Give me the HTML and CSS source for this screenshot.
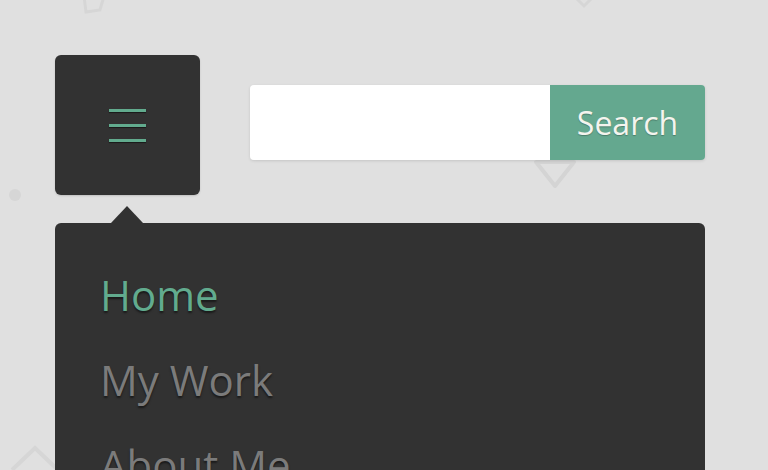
FILE: index.html
```html
<!DOCTYPE html>
<html lang="en">

<head>
  <meta charset="UTF-8">
  <meta name="viewport" content="width=device-width, initial-scale=1.0">
  <title>Menu</title>
  <link rel="stylesheet" href="styles.css">
</head>

<body>
  <svg class="bg-shapes" width="768" height="470" viewBox="0 0 768 470">
    <path d="M84 -4 L104 -4 L100 10 L86 12 Z" fill="none" stroke="#d6d6d6" stroke-width="3" />
    <path d="M572 -6 L596 -6 L584 6 Z" fill="none" stroke="#d6d6d6" stroke-width="3" />
    <path d="M536 162 L574 162 L555 186 Z" fill="none" stroke="#d4d4d4" stroke-width="4" stroke-linejoin="round" />
    <circle cx="15" cy="195" r="6" fill="#d6d6d6" />
    <path d="M12 470 L35 448 L58 470" fill="none" stroke="#d6d6d6" stroke-width="4" />
  </svg>

  <div id="container">
    <div class="top">
      <button class="btn btn__menu" aria-label="menu">
        <span class="bar"></span>
        <span class="bar"></span>
        <span class="bar"></span>
      </button>
      <form class="search">
        <input class="search__input" type="text">
        <button class="btn btn__search" type="button">Search</button>
      </form>
    </div>

    <nav class="menu">
      <ul class="menu__list">
        <li class="menu__item active">Home</li>
        <li class="menu__item">My Work</li>
        <li class="menu__item">About Me</li>
      </ul>
    </nav>
  </div>
</body>

</html>
```

FILE: styles.css
```css
html,
body {
  margin: 0;
  padding: 0;
  height: 100%;
  overflow: hidden;
}

body {
  position: relative;
  background: #e0e0e0;
  font-family: "Open Sans", "Liberation Sans", sans-serif;
}

ul {
  margin: 0;
  padding: 0;
}

ul,
li {
  list-style: none;
}

.bg-shapes {
  position: absolute;
  left: 0;
  top: 0;
  z-index: 0;
}

#container {
  position: relative;
  z-index: 1;
  width: 650px;
  padding: 55px 0 0 55px;
}

#container .top {
  display: flex;
  align-items: flex-start;
}

#container .btn {
  border: 0;
  padding: 0;
  font-family: inherit;
  cursor: pointer;
}

#container .btn__menu {
  display: flex;
  flex-direction: column;
  align-items: center;
  justify-content: center;
  gap: 12px;
  width: 145px;
  height: 140px;
  background: #323232;
  border-radius: 6px;
  box-shadow: 0 1px 2px rgba(0, 0, 0, 0.15);
  position: relative;
}

#container .btn__menu::after {
  content: "";
  position: absolute;
  left: 56px;
  bottom: -28px;
  border: 16px solid transparent;
  border-top: 0;
  border-bottom: 17px solid #323232;
}

#container .btn__menu .bar {
  display: block;
  width: 37px;
  height: 3px;
  background: #62ab8e;
  box-shadow: 0 1px 1px rgba(0, 0, 0, 0.5);
}

#container .search {
  display: flex;
  margin: 30px 0 0 50px;
  width: 455px;
  height: 75px;
  border-radius: 4px;
  box-shadow: 0 1px 3px rgba(0, 0, 0, 0.12);
}

#container .search__input {
  flex: 1;
  min-width: 0;
  border: 0;
  outline: 0;
  background: #fff;
  border-radius: 4px 0 0 4px;
}

#container .btn__search {
  width: 155px;
  background: #64a88f;
  color: #f4f4ee;
  font-size: 32px;
  border-radius: 0 4px 4px 0;
  text-shadow: 0 1px 1px rgba(0, 0, 0, 0.25);
}

#container .menu {
  margin-top: 28px;
  height: 300px;
  background: #323232;
  border-radius: 6px;
  padding: 29px 0 0 45px;
}

#container .menu__item {
  font-size: 42px;
  line-height: 85px;
  color: #7b7b7b;
  text-shadow: 0 2px 2px rgba(0, 0, 0, 0.5);
}

#container .menu__item.active {
  color: #62ab8e;
}
```
